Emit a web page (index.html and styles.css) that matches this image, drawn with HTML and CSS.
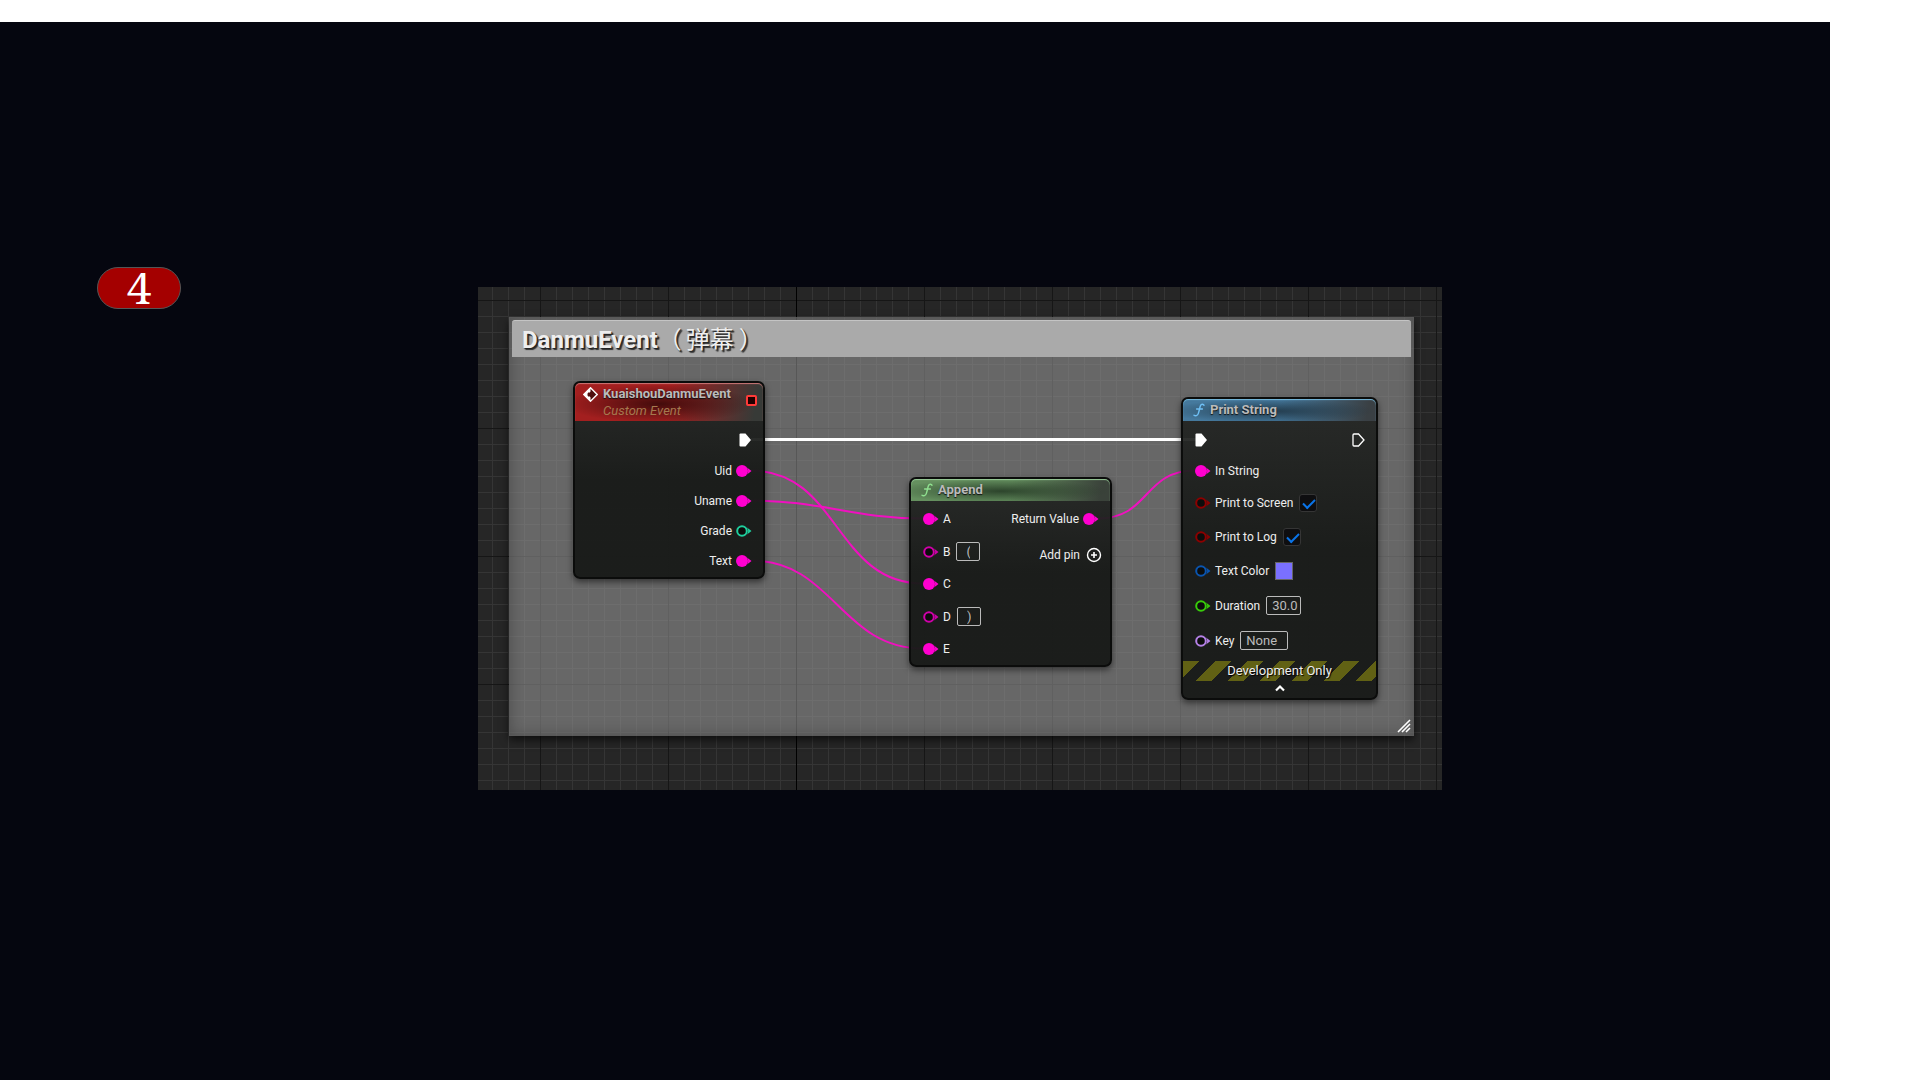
FILE: index.html
```
<!DOCTYPE html>
<html lang="zh">

<head>
    <meta charset="utf-8">
    <title>DanmuEvent</title>
    <link rel="stylesheet" href="styles.css">
</head>

<body>
    <!-- shared pin shapes -->
    <svg class="defs" width="0" height="0">
        <symbol id="pin" viewBox="0 0 16 14">
            <circle cx="6" cy="7" r="6" fill="currentColor" />
            <path d="M11 3.5L15.5 7L11 10.5C12.6 8.4 12.6 5.6 11 3.5z" fill="currentColor" />
        </symbol>
        <symbol id="pin-open" viewBox="0 0 16 14">
            <circle cx="6" cy="7" r="4.8" fill="#0c0d0c" stroke="currentColor" stroke-width="2" />
            <path d="M11 3.5L15.5 7L11 10.5C12.6 8.4 12.6 5.6 11 3.5z" fill="currentColor" />
        </symbol>
        <symbol id="exec" viewBox="0 0 13 14">
            <path d="M1.5 .5H6.5L12 7L6.5 13.5H1.5Q.5 13.5 .5 12.5V1.5Q.5 .5 1.5 .5z" fill="#fff" />
        </symbol>
        <symbol id="exec-open" viewBox="0 0 13 14">
            <path d="M2 1H6.5L12 7L6.5 13H2Q1 13 1 12V2Q1 1 2 1z" fill="none" stroke="#fff" stroke-width="1.3" />
        </symbol>
        <symbol id="func" viewBox="0 0 12 14">
            <path d="M11 2.3C10.6 .9 8.2 .7 7.4 2.8C6.6 5 6.2 8 5.3 10.6C4.6 12.8 2.3 13.4 1 12.2M3.6 6H9.4" fill="none" stroke="currentColor" stroke-width="1.4" stroke-linecap="round" />
        </symbol>
    </svg>

    <main class="page">
        <div class="step">4</div>

        <div class="graph">
            <section class="comment">
                <h2>DanmuEvent<span>（<span class="zh">弹幕</span>）</span></h2>
                <svg class="grip" width="14" height="14" viewBox="0 0 14 14">
                    <path d="M1 13L13 1M5 13L13 5M9 13L13 9" stroke="#fff" stroke-width="1.6" />
                </svg>
            </section>

            <svg class="wires" width="964" height="503" viewBox="0 0 964 503">
                <path class="wire-exec" d="M273 152.500H718" />
                <path d="M273 183.500C361 183.500 357 296.500 445 296.500" />
                <path d="M273 213.500C343 213.500 375 231.500 445 231.500" />
                <path d="M273 273.500C355 273.500 363 361.500 445 361.500" />
                <path d="M620 231.500C672 231.500 665 183.500 717 183.500" />
            </svg>

            <article class="node event">
                <header class="red">
                    <svg class="diamond" width="15" height="15" viewBox="0 0 15 15">
                        <path d="M7.500 .8L14.200 7.500L7.500 14.200L.8 7.500z" fill="#500f0f" stroke="#fff" stroke-width="1.4" />
                        <path d="M7.500 .5V5.500H5V9.500H7.500V14.500L.5 7.500z" fill="#fff" />
                        <path d="M7 4.500L10.500 7.500L7 10.500V8.800H4.500V6.200H7z" fill="#500f0f" />
                    </svg>
                    <div>
                        <h3>KuaishouDanmuEvent</h3>
                        <p>Custom Event</p>
                    </div>
                    <span class="delegate"></span>
                </header>
                <div class="pins out">
                    <div class="row"><svg class="exec"><use href="#exec" /></svg></div>
                    <div class="row">Uid<svg class="pin string"><use href="#pin" /></svg></div>
                    <div class="row">Uname<svg class="pin string"><use href="#pin" /></svg></div>
                    <div class="row">Grade<svg class="pin int"><use href="#pin-open" /></svg></div>
                    <div class="row">Text<svg class="pin string"><use href="#pin" /></svg></div>
                </div>
            </article>

            <article class="node append">
                <header class="green">
                    <svg class="func"><use href="#func" /></svg>
                    <h3>Append</h3>
                </header>
                <div class="columns">
                    <div class="pins in">
                        <div class="row"><svg class="pin string"><use href="#pin" /></svg>A</div>
                        <div class="row"><svg class="pin string dim"><use href="#pin-open" /></svg><label for="pin-b">B</label><input type="text" id="pin-b" class="char" value="("></div>
                        <div class="row"><svg class="pin string"><use href="#pin" /></svg>C</div>
                        <div class="row"><svg class="pin string dim"><use href="#pin-open" /></svg><label for="pin-d">D</label><input type="text" id="pin-d" class="char" value=")"></div>
                        <div class="row"><svg class="pin string"><use href="#pin" /></svg>E</div>
                    </div>
                    <div class="pins out">
                        <div class="row">Return Value<svg class="pin string"><use href="#pin" /></svg></div>
                        <button type="button" class="add-pin">Add pin
                            <svg width="16" height="16" viewBox="0 0 16 16">
                                <circle cx="8" cy="8" r="6.500" fill="none" stroke="#fff" stroke-width="1.400" />
                                <path d="M8 5V11M5 8H11" stroke="#fff" stroke-width="1.600" />
                            </svg>
                        </button>
                    </div>
                </div>
            </article>

            <article class="node print">
                <header class="blue">
                    <svg class="func"><use href="#func" /></svg>
                    <h3>Print String</h3>
                </header>
                <div class="pins in">
                    <div class="row between"><svg class="exec"><use href="#exec" /></svg><svg class="exec"><use href="#exec-open" /></svg></div>
                    <div class="row"><svg class="pin string"><use href="#pin" /></svg>In String</div>
                    <div class="row tall"><svg class="pin bool"><use href="#pin-open" /></svg><label for="screen">Print to Screen</label><input type="checkbox" id="screen" checked></div>
                    <div class="row tall"><svg class="pin bool"><use href="#pin-open" /></svg><label for="log">Print to Log</label><input type="checkbox" id="log" checked></div>
                    <div class="row tall"><svg class="pin struct"><use href="#pin-open" /></svg><label for="color">Text Color</label><input type="color" id="color" value="#7a70ff"></div>
                    <div class="row taller"><svg class="pin float"><use href="#pin-open" /></svg><label for="duration">Duration</label><input type="text" id="duration" class="duration" value="30.0"></div>
                    <div class="row taller"><svg class="pin name"><use href="#pin-open" /></svg><label for="key">Key</label><input type="text" id="key" class="key" value="None"></div>
                </div>
                <div class="dev-only">Development Only</div>
                <button type="button" class="collapse" aria-label="Collapse">
                    <svg width="14" height="8" viewBox="0 0 14 8"><path d="M3 6.500L7 2.500L11 6.500" fill="none" stroke="#fff" stroke-width="2.200" /></svg>
                </button>
            </article>
        </div>
    </main>
</body>

</html>
```
FILE: styles.css
```
* {
    box-sizing: border-box;
}

html,
body {
    height: 100%;
}

body {
    margin: 0;
    padding: 22px 90px 0 0;
    background: #fff;
    font-family: Roboto, "Noto Sans CJK SC", sans-serif;
    font-size: 12px;
    color: #eee;
}

h2,
h3,
p {
    margin: 0;
}

.defs {
    position: absolute;
}

.page {
    display: flex;
    align-items: flex-start;
    height: 100%;
    padding: 245px 0 0 97px;
    background: #05060f;
}

.step {
    width: 84px;
    height: 42px;
    border: 1px solid #555;
    border-radius: 21px;
    background: #a40000;
    color: #fff;
    font-family: "Noto Serif", "Liberation Serif", serif;
    font-size: 44px;
    line-height: 38px;
    text-align: center;
}

/* graph canvas: 16px cells, a dark line every 8 cells */
.graph {
    position: relative;
    flex: none;
    width: 964px;
    height: 503px;
    margin: 20px 0 0 297px;
    overflow: hidden;
    background-color: #262626;
    background-image:
        linear-gradient(90deg, #000 1px, transparent 1px),
        linear-gradient(90deg, #161616 1px, transparent 1px),
        linear-gradient(#161616 1px, transparent 1px),
        linear-gradient(90deg, #353535 1px, transparent 1px),
        linear-gradient(#353535 1px, transparent 1px);
    background-size: 1024px 100%, 128px 100%, 100% 128px, 16px 100%, 100% 16px;
    background-position: 318px 0, 62px 0, 0 13px, 14px 0, 0 13px;
}

.comment {
    position: absolute;
    left: 31px;
    top: 30px;
    width: 905px;
    height: 419px;
    padding: 2px;
    background: rgba(150, 150, 150, .58);
    border: 1px solid rgba(70, 70, 70, .4);
    box-shadow: 0 4px 8px rgba(0, 0, 0, .6), inset 0 0 14px rgba(0, 0, 0, .25);
}

.comment h2 {
    height: 37px;
    padding-left: 10px;
    background: #aaa;
    border-top: 1px solid #c4c4c4;
    border-radius: 3px 3px 0 0;
    color: #eee;
    font-size: 24px;
    font-weight: 700;
    line-height: 38px;
    text-shadow: 1px 1px 1px #222, 2px 2px 1px #333;
}

.comment h2 span {
    font-weight: 400;
}

.comment .zh {
    padding: 0 5px 0 4px;
}

.grip {
    position: absolute;
    right: 2px;
    bottom: 2px;
}

.wires {
    position: absolute;
    left: 0;
    top: 0;
}

.wires path {
    fill: none;
    stroke: #f010c0;
    stroke-width: 2;
}

.wires .wire-exec {
    stroke: #fff;
    stroke-width: 3;
}

.node {
    position: absolute;
    border: 2px solid #0b0c0b;
    border-radius: 7px;
    background: linear-gradient(rgba(36, 38, 36, .93), rgba(24, 26, 24, .96) 50%);
    box-shadow: 0 3px 6px rgba(0, 0, 0, .5);
}

.event {
    left: 95px;
    top: 94px;
    width: 192px;
    height: 198px;
}

.append {
    left: 431px;
    top: 190px;
    width: 203px;
    height: 190px;
}

.print {
    left: 703px;
    top: 110px;
    width: 197px;
    height: 303px;
}

.node header {
    display: flex;
    align-items: center;
    gap: 5px;
    height: 22px;
    padding-left: 10px;
    border-radius: 5px 5px 0 0;
}

.node h3 {
    color: #bbb;
    font-size: 13px;
    font-weight: 700;
    line-height: 16px;
    text-shadow: 0 1px 1px #111;
}

.node .red {
    align-items: flex-start;
    height: 38px;
    padding: 3px 6px 0 8px;
    background: radial-gradient(ellipse at 45% 55%, rgba(50, 8, 8, .85), transparent 65%), linear-gradient(100deg, #a31f1f 50%, #373a37 95%);
    box-shadow: inset 0 1px 1px #c77;
}

.red p {
    color: #a5794f;
    font-size: 13px;
    font-style: italic;
    line-height: 18px;
}

.diamond {
    margin-top: 1px;
}

.delegate {
    width: 11px;
    height: 11px;
    margin: 9px 0 0 auto;
    border: 2px solid #ff3a38;
    border-radius: 2px;
    background: #200;
}

.green {
    color: #8fe08f;
    background: radial-gradient(ellipse at 45% 55%, rgba(35, 55, 35, .85), transparent 70%), linear-gradient(100deg, #65905f 50%, #3a423a 95%);
    box-shadow: inset 0 1px 1px #9c9;
}

.blue {
    color: #6fc0f5;
    background: radial-gradient(ellipse at 45% 55%, rgba(28, 48, 62, .85), transparent 70%), linear-gradient(100deg, #45799d 50%, #3a4044 95%);
    box-shadow: inset 0 1px 1px #7bd;
}

.func {
    width: 12px;
    height: 14px;
}

.pins {
    display: flex;
    flex-direction: column;
}

.row {
    display: flex;
    align-items: center;
    gap: 4px;
    height: 30px;
}

.row input {
    margin: 0 0 0 2px;
}

.tall {
    height: 34px;
}

.taller {
    height: 35px;
}

.between {
    justify-content: space-between;
    padding-right: 11px;
}

.in {
    padding-left: 12px;
}

.out {
    align-items: flex-end;
    padding-right: 11px;
}

.event .pins,
.print .pins {
    padding-top: 4px;
}

.event .row:first-child,
.print .row:first-child {
    margin-bottom: 1px;
}

.pin {
    width: 16px;
    height: 14px;
}

.exec {
    width: 13px;
    height: 14px;
}

.string {
    color: #ff00d0;
}

.dim {
    color: #d000aa;
}

.int {
    color: #1fcf9d;
}

.bool {
    color: #8c0000;
}

.struct {
    color: #0a55b0;
}

.float {
    color: #38cc0a;
}

.name {
    color: #b682e8;
}

.columns {
    display: flex;
    justify-content: space-between;
}

.append .in {
    justify-content: space-between;
    height: 163px;
}

.append .pins {
    padding-top: 3px;
}

button {
    padding: 0;
    border: none;
    background: none;
    color: #eee;
    font: inherit;
    cursor: pointer;
}

.add-pin {
    display: flex;
    align-items: center;
    gap: 6px;
    margin: 13px -3px 0 0;
}

input[type=text] {
    height: 19px;
    padding: 0 5px;
    border: 1px solid #bbb;
    border-radius: 2px;
    background: transparent;
    color: #bbb;
    font: 13px Roboto, sans-serif;
}

input.char {
    width: 24px;
    padding: 0 9px;
}

input.duration {
    width: 35px;
    padding: 0 0 0 5px;
}

input.key {
    width: 48px;
}

input[type=checkbox] {
    appearance: none;
    width: 18px;
    height: 18px;
    border: 1px solid #353535;
    border-radius: 3px;
    background: #0e0e10;
}

input[type=checkbox]:checked::before {
    content: "";
    display: block;
    width: 10px;
    height: 5px;
    margin: 4px 3px;
    border: solid #0a74e8;
    border-width: 0 0 2px 2px;
    transform: rotate(-45deg);
}

input[type=color] {
    appearance: none;
    width: 18px;
    height: 18px;
    padding: 0;
    border: 1px solid #666;
    background: #7a70ff;
}

input[type=color]::-webkit-color-swatch-wrapper {
    padding: 0;
}

input[type=color]::-webkit-color-swatch {
    border: none;
}

/* hazard stripes */
.dev-only {
    height: 20px;
    margin-top: 3px;
    background: linear-gradient(135deg, #616114 25%, transparent 25%, transparent 50%, #616114 50%, #616114 75%, transparent 75%) 0 0 / 32px 32px;
    font-size: 13px;
    line-height: 20px;
    text-align: center;
    text-shadow: 1px 1px 1px #000;
}

.collapse {
    display: block;
    height: 14px;
    margin: 0 auto;
}

.collapse svg {
    display: block;
    margin: auto;
}
```
